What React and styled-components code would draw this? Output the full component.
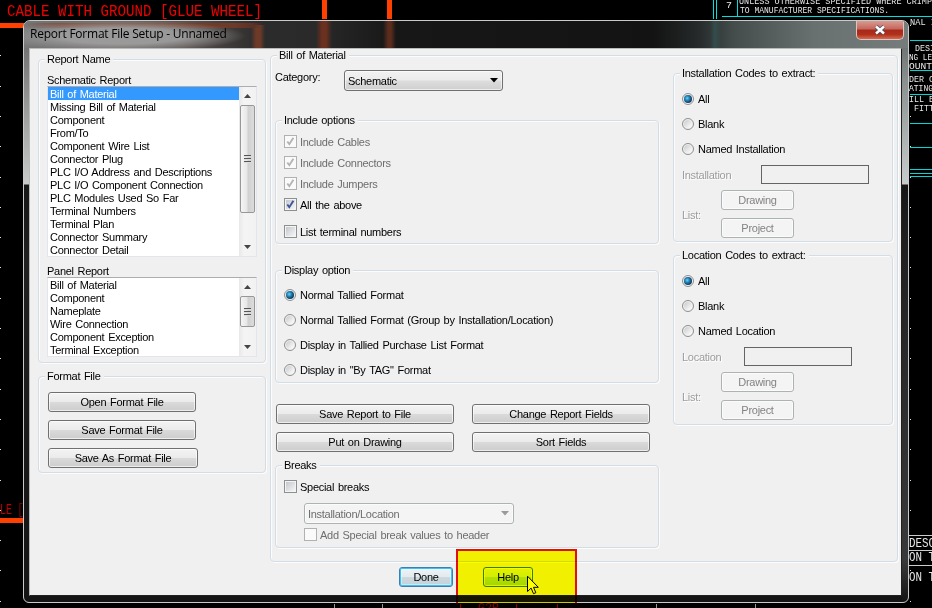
import React from 'react'
import styled, { createGlobalStyle, css } from 'styled-components'

const GlobalStyle = createGlobalStyle`
    * {
        box-sizing: border-box;
    }
    body {
        margin: 0;
        background: #000;
        font-family: 'Liberation Sans', Arial, sans-serif;
        font-size: 11px;
        line-height: 13px;
        letter-spacing: -0.28px;
        word-spacing: 1px;
        color: #000;
        overflow: hidden;
    }
`

const Desktop = styled.main`
    position: relative;
    width: 932px;
    height: 608px;
    background: #000;
    overflow: hidden;
    padding: 20px 23px 5px;
`
const Backdrop = styled.svg`
    position: absolute;
    left: 0;
    top: 0;
`
const Window = styled.section`
    position: relative;
    display: flex;
    flex-direction: column;
    width: 886px;
    height: 583px;
    border: 1px solid #c9cbcb;
    border-radius: 7px 7px 6px 6px;
    background:
        linear-gradient(180deg, #626262 0, #888 60px, #c8caca 163px, #161616 164px, #202020 240px, #141414 100%) left / 6px 100% no-repeat,
        linear-gradient(180deg, #5a6060 0, #8a9090 60px, #c8cccc 163px, #161616 164px, #222 240px, #3a3a3a 540px, #141414 100%) right / 6px 100% no-repeat,
        #151515;
    overflow: hidden;
`
const TitleBar = styled.header`
    display: flex;
    justify-content: space-between;
    height: 27px;
    flex: none;
    padding-left: 6px;
    background:
        radial-gradient(ellipse 124px 16px at 98px 15px, rgba(160, 160, 160, 0.9) 50%, rgba(150, 150, 150, 0) 100%),
        linear-gradient(90deg, transparent, #7a4a3a 40px, #6e3a28 210px, #5c3226 228px, transparent 240px) 0 2px / 240px 5px no-repeat,
        linear-gradient(90deg, transparent, #6e3a28 5px, #6e3a28 9px, transparent) 227px 4px / 14px 23px no-repeat,
        linear-gradient(90deg, transparent 292px, #6b3020 298px, #6b3020 302px, transparent 308px),
        linear-gradient(90deg, transparent 359px, #5a2c1c 364px, #5a2c1c 367px, transparent 372px),
        linear-gradient(90deg, transparent 686px, rgba(50, 90, 90, 0.6) 691px, transparent 697px),
        linear-gradient(90deg, #777 0, #5a5250 160px, #2c2b2b 235px, #2a2a2a 290px, #171717 370px, #131313 630px, #262a2a 674px, #444c4c 710px, #687070 790px, #767c7c 100%);
`
const Title = styled.h1`
    margin: 0;
    font-family: 'Open Sans', 'Noto Sans', sans-serif;
    font-size: 12px;
    font-weight: 400;
    line-height: 26px;
    letter-spacing: -0.23px;
    word-spacing: 0;
    white-space: nowrap;
`
const CloseButton = styled.button`
    width: 48px;
    height: 19px;
    margin-right: 4px;
    padding: 0;
    display: flex;
    align-items: center;
    justify-content: center;
    border: 1px solid #d9c6c2;
    border-top: 0;
    border-radius: 0 0 5px 5px;
    background: linear-gradient(180deg, #d99a90 0, #c4665a 45%, #a8281a 50%, #b0301c 75%, #d66a50 100%);
`
const Client = styled.div`
    flex: 1;
    display: flex;
    flex-direction: column;
    margin: 0 6px 6px 5px;
    border: 1px solid #b9bbbb;
    border-right-color: #202020;
    border-bottom-color: #202020;
    background: #f0f0f0;
`
const Columns = styled.div`
    display: flex;
    align-items: flex-start;
    gap: 4px;
    height: 513px;
    padding-left: 8px;
`
const Column = styled.div`
    display: flex;
    flex-direction: column;
    gap: ${({ $gap }) => $gap || 0}px;
    padding-top: ${({ $top }) => $top || 0}px;
    width: ${({ $width }) => $width}px;
`
const GroupBox = styled.fieldset`
    min-width: 0;
    margin: 0;
    width: ${({ $width }) => $width}px;
    height: ${({ $height }) => $height}px;
    padding: ${({ $pad }) => $pad || '0'};
    border: 1px solid #d3dde6;
    border-radius: 4px;
    box-shadow: inset 1px 1px 0 #fcfcfc, 1px 1px 0 #fcfcfc;
`
const Legend = styled.legend`
    height: 13px;
    margin-left: ${({ $left = 6 }) => $left}px;
    padding: 0 3px 0 2px;
    background: #f0f0f0;
    white-space: nowrap;
`
const FieldLabel = styled.div`
    height: 13px;
    line-height: 15px;
    white-space: nowrap;
    color: ${({ $disabled }) => ($disabled ? '#9d9d9d' : '#000')};
    text-shadow: ${({ $disabled }) => ($disabled ? '1px 1px 0 #fff' : 'none')};
`
const ListBox = styled.div`
    display: flex;
    width: 210px;
    margin-bottom: ${({ $after }) => $after || 0}px;
    border: 1px solid #e2e6ec;
    border-top-color: #abadb3;
    background: #fff;
`
const Items = styled.ul`
    flex: 1;
    margin: 0;
    padding: 0;
    list-style: none;
`
const Item = styled.li`
    height: 13px;
    line-height: 14px;
    padding-left: 2px;
    white-space: nowrap;
    ${({ $selected }) => $selected && css`
        background: #3399ff;
        color: #fff;
    `}
`
const ScrollTrack = styled.div`
    display: flex;
    flex-direction: column;
    align-items: center;
    justify-content: space-between;
    width: 17px;
    padding-bottom: 1px;
    background: linear-gradient(90deg, #e8e8e8, #f4f4f4 30%, #f2f2f2);
`
const ScrollArrow = styled.svg`
    display: block;
    flex: none;
    width: 17px;
    height: 17px;
`
const ScrollThumb = styled.div`
    display: flex;
    flex-direction: column;
    justify-content: center;
    align-items: center;
    gap: 1px;
    width: 15px;
    height: ${({ $height }) => $height}px;
    margin-bottom: auto;
    margin-top: 1px;
    border: 1px solid #979797;
    border-radius: 2px;
    background: linear-gradient(90deg, #f5f5f5, #e6e6e6 48%, #cfcfcf 52%, #dcdcdc);
`
const Grip = styled.i`
    width: 7px;
    height: 2px;
    border-top: 1px solid #555;
    border-bottom: 1px solid #ddd;
`
const PushButton = styled.button`
    flex: none;
    width: ${({ $width }) => $width}px;
    height: 20px;
    padding: 0;
    border: 1px solid #707070;
    border-radius: 3px;
    background: linear-gradient(180deg, #f3f3f3 0, #ebebeb 48%, #dadada 52%, #cdcdcd 100%);
    box-shadow: inset 0 0 0 1px rgba(255, 255, 255, 0.65);
    font: inherit;
    letter-spacing: inherit;
    word-spacing: inherit;
    line-height: 18px;
    color: #000;
    white-space: nowrap;
    ${({ $focused }) => $focused && css`
        border-color: #3c7fb1;
        box-shadow: inset 0 0 0 1px #35c5f5, inset 0 0 0 2px rgba(255, 255, 255, 0.4);
        background: linear-gradient(180deg, #eef3f6 0, #e3ebef 48%, #cdd9df 52%, #c2d0d8 100%);
    `}
    ${({ $hot }) => $hot && css`
        border-color: #3c7fb1;
        background: linear-gradient(180deg, #e2f2fc 0, #d4edfb 48%, #b4e0f8 52%, #a2d6f2 100%);
    `}
    &:disabled {
        border-color: #adb2b5;
        background: #f4f4f4;
        color: #838383;
    }
`
const Dropdown = styled.div`
    display: flex;
    align-items: center;
    justify-content: space-between;
    width: ${({ $width }) => $width}px;
    height: 21px;
    padding: 0 4px 0 3px;
    border: 1px solid ${({ $disabled }) => ($disabled ? '#adb2b5' : '#707070')};
    border-radius: 3px;
    background: ${({ $disabled }) => $disabled
        ? '#f4f4f4'
        : 'linear-gradient(180deg, #f2f2f2 0, #ebebeb 48%, #dddddd 52%, #cfcfcf 100%)'};
    box-shadow: inset 0 0 0 1px rgba(255, 255, 255, 0.6);
    color: ${({ $disabled }) => ($disabled ? '#6d6d6d' : '#000')};
`
const DropdownValue = styled.span`
    padding-top: 2px;
`
const Option = styled.label`
    display: flex;
    align-items: center;
    gap: 3px;
    height: 13px;
    margin-top: ${({ $before }) => $before || 0}px;
    margin-left: ${({ $indent }) => $indent || 0}px;
    color: ${({ $disabled }) => ($disabled ? '#6d6d6d' : '#000')};
    white-space: nowrap;
`
const OptionText = styled.span`
    padding-top: 1px;
`
const CheckSquare = styled.span`
    width: 13px;
    height: 13px;
    padding: 1px;
    border: 1px solid ${({ $disabled }) => ($disabled ? '#b1b1b1' : '#8e8f8f')};
    background: ${({ $disabled }) => $disabled
        ? '#fafafa'
        : 'linear-gradient(135deg, #c3c7cd, #f6f6f6) content-box, #f4f4f4'};
    box-shadow: ${({ $disabled }) => ($disabled ? 'none' : 'inset 0 0 0 1px #f4f4f4')};
    svg {
        display: block;
    }
`
const RadioCircle = styled.span`
    display: flex;
    align-items: center;
    justify-content: center;
    width: 12px;
    height: 12px;
    margin-right: 1px;
    border: 1px solid #8e8f8f;
    border-radius: 50%;
    background: linear-gradient(135deg, #bfc3c8, #f6f6f6 75%) content-box, #f4f4f4;
    box-shadow: inset 0 0 0 1px #f2f2f2;
`
const RadioDot = styled.span`
    width: 8px;
    height: 8px;
    border-radius: 50%;
    background: radial-gradient(circle at 40% 40%, #6fd0f5 0, #1f7fb5 35%, #0d2f4d 75%);
`
const ButtonGrid = styled.div`
    display: grid;
    grid-template-columns: 178px 178px;
    grid-auto-rows: 20px;
    gap: 8px 18px;
    padding: 21px 0 0 1px;
    height: 76px;
`
const CategoryRow = styled.div`
    display: flex;
    height: 52px;
    padding-top: 8px;
    > :first-child {
        width: 69px;
    }
`
const MaterialBody = styled.div`
    display: flex;
    gap: 14px;
    padding-left: 4px;
`
const NamedRow = styled.div`
    display: flex;
    align-items: center;
    justify-content: space-between;
    width: ${({ $width }) => $width}px;
    height: 19px;
    margin-top: 10px;
`
const TextBox = styled.input`
    width: 108px;
    height: 19px;
    padding: 0;
    border: 1px solid #646464;
    background: #f0f0f0;
`
const SourceRow = styled.div`
    display: flex;
    align-items: center;
    justify-content: space-between;
    width: 112px;
    margin-top: 6px;
`
const SourceButtons = styled.div`
    display: flex;
    flex-direction: column;
    gap: 8px;
`
const Footer = styled.footer`
    display: flex;
    gap: 30px;
    padding: 5px 0 0 369px;
`
const Highlight = styled.div`
    position: absolute;
    left: 456px;
    top: 549px;
    width: 121px;
    height: 54px;
    background: #ffff00;
    border: 2px solid #f01010;
    border-bottom: 0;
    background-clip: padding-box;
    mix-blend-mode: multiply;
`
const Pointer = styled.svg`
    position: absolute;
    left: 526px;
    top: 575px;
`

const schematicReports = [
  'Bill of Material', 'Missing Bill of Material', 'Component', 'From/To',
  'Component Wire List', 'Connector Plug', 'PLC I/O Address and Descriptions',
  'PLC I/O Component Connection', 'PLC Modules Used So Far', 'Terminal Numbers',
  'Terminal Plan', 'Connector Summary', 'Connector Detail'
]
const panelReports = [
  'Bill of Material', 'Component', 'Nameplate', 'Wire Connection',
  'Component Exception', 'Terminal Exception'
]
const gridRows = Array.from({ length: 20 }, (_, i) => Math.round(25 + i * 30.3))

const Arrow = ({ color = '#000' }) => (
  <svg width="8" height="5" viewBox="0 0 8 5">
    <path d="M0 0h8L4 4.6z" fill={color} />
  </svg>
)

const ReportList = ({ items, selected, thumb, after }) => (
  <ListBox $after={after}>
    <Items>
      {items.map((name, i) => <Item key={name} $selected={i === selected}>{name}</Item>)}
    </Items>
    <ScrollTrack>
      <ScrollArrow viewBox="0 0 17 17"><path d="M5 11l3.500-4 3.500 4z" fill="#444" /></ScrollArrow>
      <ScrollThumb $height={thumb}><Grip /><Grip /><Grip /></ScrollThumb>
      <ScrollArrow viewBox="0 0 17 17"><path d="M5 7h7l-3.500 4z" fill="#444" /></ScrollArrow>
    </ScrollTrack>
  </ListBox>
)

const Check = ({ label, checked, disabled, before, indent }) => (
  <Option $disabled={disabled} $before={before} $indent={indent}>
    <CheckSquare $disabled={disabled}>
      {checked && (
        <svg width="9" height="9" viewBox="0 0 9 9">
          <path
            d="M1.300 4.500l2 2.700L7.400 0.800"
            fill="none"
            stroke={disabled ? '#b4b4b4' : '#3f559b'}
            strokeWidth="1.900"
          />
        </svg>
      )}
    </CheckSquare>
    <OptionText>{label}</OptionText>
  </Option>
)

const Radio = ({ label, checked, before }) => (
  <Option $before={before}>
    <RadioCircle>{checked && <RadioDot />}</RadioCircle>
    <OptionText>{label}</OptionText>
  </Option>
)

const CodesGroup = ({ name, rowWidth, height }) => (
  <GroupBox $width={220} $height={height} $pad="12px 0 0 8px">
    <Legend $left={-2}>{name} Codes to extract:</Legend>
    <Radio label="All" checked />
    <Radio label="Blank" before={12} />
    <Radio label={`Named ${name}`} before={12} />
    <NamedRow $width={rowWidth}>
      <FieldLabel $disabled>{name}</FieldLabel>
      <TextBox disabled />
    </NamedRow>
    <SourceRow>
      <FieldLabel $disabled>List:</FieldLabel>
      <SourceButtons>
        <PushButton $width={73} disabled>Drawing</PushButton>
        <PushButton $width={73} disabled>Project</PushButton>
      </SourceButtons>
    </SourceRow>
  </GroupBox>
)

const CadText = ({ x, y, width, size = 9, fill = '#e8e8e8', children }) => (
  <text
    x={x}
    y={y}
    fill={fill}
    fontSize={size}
    fontFamily="Liberation Mono, monospace"
    letterSpacing="0"
    wordSpacing="0"
    textLength={width}
    lengthAdjust="spacingAndGlyphs"
    xmlSpace="preserve"
  >
    {children}
  </text>
)

const Drawing = () => (
  <Backdrop width="932" height="608">
    {gridRows.map(y => <path key={y} d={`M0 ${y}.500h1M910 ${y}.500h1`} stroke="#ddd" />)}
    <CadText x={7} y={16} width={255} size={17} fill="#f00000">CABLE WITH GROUND [GLUE WHEEL]</CadText>
    <path d="M0 25.500h24M0 520.500h23" stroke="#ff4000" strokeWidth="5" />
    <path d="M324.500 0v19M389.500 0v19" stroke="#ff4000" strokeWidth="5" />
    <CadText x={0} y={514} width={12} size={15} fill="#c00000">LE</CadText>
    <CadText x={17} y={514} width={7} size={15} fill="#800000">[</CadText>
    <path d="M713.500 0v19M716.500 0v19M737.500 0v17M722 16.500h210" stroke="#00e0e0" />
    <CadText x={726} y={8} width={6}>7</CadText>
    <CadText x={739} y={4} width={193}>UNLESS OTHERWISE SPECIFIED WHERE CRIMP</CadText>
    <CadText x={740} y={13} width={149}>TO MANUFACTURER SPECIFICATIONS.</CadText>
    <path
      d="M910 40.500h22M910 70.500h22M910 94.500h22M910 123.500h22M910 147.500h22M910 169.500h22M910 173.500h22M910 176.500h22"
      stroke="#00d8d8"
    />
    <CadText x={910} y={25} width={26}>NAL I</CadText>
    <CadText x={915} y={51} width={20}>DESI</CadText>
    <CadText x={909} y={60} width={23}>NG LE</CadText>
    <CadText x={909} y={69} width={23}>OUNT</CadText>
    <CadText x={909} y={82} width={25}>DER C</CadText>
    <CadText x={909} y={91} width={24}>ATING</CadText>
    <CadText x={909} y={102} width={25}>ILL B</CadText>
    <CadText x={914} y={111} width={20}>FITT</CadText>
    <path d="M909 535.500h23M909 550.500h23M909 565.500h23" stroke="#ccc" />
    <CadText x={909} y={547} width={26} size={12}>DESC</CadText>
    <CadText x={909} y={561} width={26} size={12}>ON T</CadText>
    <CadText x={909} y={581} width={26} size={12}>ON T</CadText>
    <path d="M334.500 604v4M382.500 604v4M656.500 604v4M755.500 604v4" stroke="#999" />
    <path d="M460.500 604v4M516.500 604v4M557.500 604v4" stroke="#800" />
    <CadText x={478} y={612} width={21} size={12} fill="#800000">G2R</CadText>
  </Backdrop>
)

const App = () => (
  <>
    <GlobalStyle />
    <Desktop>
      <Drawing />
      <Window>
        <TitleBar>
          <Title>Report Format File Setup - Unnamed</Title>
          <CloseButton aria-label="Close">
            <svg width="12" height="10" viewBox="0 0 12 10">
              <path d="M2 1.500l8 7M10 1.500l-8 7" stroke="#43506a" strokeWidth="4" />
              <path d="M2 1.500l8 7M10 1.500l-8 7" stroke="#fff" strokeWidth="2.400" />
            </svg>
          </CloseButton>
        </TitleBar>
        <Client>
          <Columns>
            <Column $width={228} $top={4} $gap={7}>
              <GroupBox $width={228} $height={310} $pad="7px 0 0 8px">
                <Legend $left={-2}>Report Name</Legend>
                <FieldLabel>Schematic Report</FieldLabel>
                <ReportList items={schematicReports} selected={0} thumb={108} after={7} />
                <FieldLabel>Panel Report</FieldLabel>
                <ReportList items={panelReports} thumb={31} />
              </GroupBox>
              <GroupBox $width={228} $height={103} $pad="9px 0 0 9px">
                <Legend $left={-3}>Format File</Legend>
                <Column $gap={8}>
                  <PushButton $width={148}>Open Format File</PushButton>
                  <PushButton $width={148}>Save Format File</PushButton>
                  <PushButton $width={150}>Save As Format File</PushButton>
                </Column>
              </GroupBox>
            </Column>
            <GroupBox $width={628} $height={513}>
              <Legend>Bill of Material</Legend>
              <MaterialBody>
                <Column $width={384}>
                  <CategoryRow>
                    <FieldLabel>Category:</FieldLabel>
                    <Dropdown $width={159}>
                      <DropdownValue>Schematic</DropdownValue>
                      <Arrow />
                    </Dropdown>
                  </CategoryRow>
                  <GroupBox $width={384} $height={130} $pad="8px 0 0 8px">
                    <Legend $left={-2}>Include options</Legend>
                    <Check label="Include Cables" checked disabled />
                    <Check label="Include Connectors" checked disabled before={8} />
                    <Check label="Include Jumpers" checked disabled before={8} />
                    <Check label="All the above" checked before={8} />
                    <Check label="List terminal numbers" before={14} />
                  </GroupBox>
                  <Column $top={20}>
                    <GroupBox $width={384} $height={119} $pad="11px 0 0 8px">
                      <Legend $left={-2}>Display option</Legend>
                      <Radio label="Normal Tallied Format" checked />
                      <Radio label="Normal Tallied Format (Group by Installation/Location)" before={12} />
                      <Radio label="Display in Tallied Purchase List Format" before={12} />
                      <Radio label={'Display in "By TAG" Format'} before={12} />
                    </GroupBox>
                  </Column>
                  <ButtonGrid>
                    <PushButton $width={178}>Save Report to File</PushButton>
                    <PushButton $width={178}>Change Report Fields</PushButton>
                    <PushButton $width={178}>Put on Drawing</PushButton>
                    <PushButton $width={178}>Sort Fields</PushButton>
                  </ButtonGrid>
                  <GroupBox $width={384} $height={89} $pad="8px 0 0 8px">
                    <Legend $left={-2}>Breaks</Legend>
                    <Check label="Special breaks" />
                    <Column $top={14}>
                      <Option as="div" $indent={20} $disabled>
                        <Dropdown $width={210} $disabled>
                          <DropdownValue>Installation/Location</DropdownValue>
                          <Arrow color="#9a9a9a" />
                        </Dropdown>
                      </Option>
                    </Column>
                    <Check label="Add Special break values to header" disabled before={8} indent={20} />
                  </GroupBox>
                </Column>
                <Column $width={220} $top={5} $gap={7}>
                  <CodesGroup name="Installation" rowWidth={187} height={175} />
                  <CodesGroup name="Location" rowWidth={170} height={176} />
                </Column>
              </MaterialBody>
            </GroupBox>
          </Columns>
          <Footer>
            <PushButton $width={54} $focused>Done</PushButton>
            <PushButton $width={50} $hot>Help</PushButton>
          </Footer>
        </Client>
      </Window>
      <Pointer width="13" height="21" viewBox="0 0 13 21">
        <path
          d="M1.500 1.200v15.300l3.600-3.400 2.400 5.600 2.300-1-2.300-5.400h4.800z"
          fill="#fff"
          stroke="#000"
        />
      </Pointer>
      <Highlight />
    </Desktop>
  </>
)

export default App
